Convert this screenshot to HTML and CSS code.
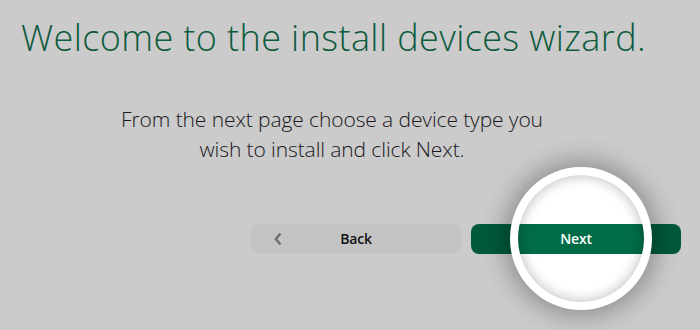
FILE: index.html
```html
<!DOCTYPE html>
<html>
<head>
<meta charset="utf-8">
<link rel="stylesheet" href="styles.css">
</head>
<body>
<div class="page">
  <h1 class="title">Welcome to the install devices wizard.</h1>
  <p class="intro">From the next page choose a device type you wish to install and click Next.</p>
  <div class="actions">
    <button class="btn btn-back">
      <svg class="chev" width="10" height="14" viewBox="0 0 10 14"><path d="M7.5 1.5 L2.8 7 L7.5 12.5" fill="none" stroke="#6e6e6e" stroke-width="2.4"/></svg>
      <span>Back</span>
    </button>
    <button class="btn btn-next">Next</button>
  </div>
</div>
<div class="spotlight">
  <div class="spot-inner">
    <div class="spot-bar">Next</div>
  </div>
</div>
</body>
</html>
```
FILE: styles.css
```css
html, body {
  margin: 0;
  padding: 0;
  width: 700px;
  height: 330px;
  overflow: hidden;
  background: #cbcbcb;
  font-family: "Open Sans", sans-serif;
}
.page {
  padding: 14px 19px 0 21px;
}
.title {
  margin: 0;
  font-weight: 300;
  font-size: 36px;
  line-height: 48px;
  color: #0c5a3c;
  letter-spacing: 0.4px;
  white-space: nowrap;
}
.intro {
  margin: 42px 0 0 91px;
  width: 440px;
  text-align: center;
  font-weight: 300;
  font-size: 21px;
  line-height: 30px;
  letter-spacing: -0.1px;
  color: #1a161a;
}
.actions {
  display: flex;
  justify-content: flex-end;
  gap: 10px;
  margin-top: 60px;
}
.btn {
  width: 210px;
  height: 30px;
  border: none;
  border-radius: 8px;
  font-family: "Open Sans", sans-serif;
  font-weight: 600;
  font-size: 14px;
  letter-spacing: -0.2px;
  position: relative;
  padding: 0;
}
.btn-back {
  background: #c3c3c3;
  color: #111;
  height: 29px;
}
.chev {
  position: absolute;
  left: 22px;
  top: 8px;
}
.btn-next {
  background: #005a3a;
  color: #d8d8d0;
}
.spotlight {
  position: absolute;
  left: 510px;
  top: 167px;
  width: 126px;
  height: 127px;
  border: 8px solid #fff;
  border-radius: 50%;
  background: #fff;
  box-shadow: 0 0 24px 6px rgba(0,0,0,0.3);
  overflow: hidden;
}
.spot-inner {
  position: relative;
  width: 100%;
  height: 100%;
  border-radius: 50%;
}
.spot-inner::after {
  content: "";
  position: absolute;
  inset: 0;
  border-radius: 50%;
  box-shadow: inset 0 0 12px 2px rgba(0,0,0,0.22);
}
.spot-bar {
  position: absolute;
  left: 0;
  right: 0;
  top: 49px;
  height: 30px;
  background: #006c47;
  color: #fff;
  font-weight: 600;
  font-size: 14px;
  letter-spacing: -0.2px;
  line-height: 30px;
  text-align: center;
  text-indent: -10px;
}
```
